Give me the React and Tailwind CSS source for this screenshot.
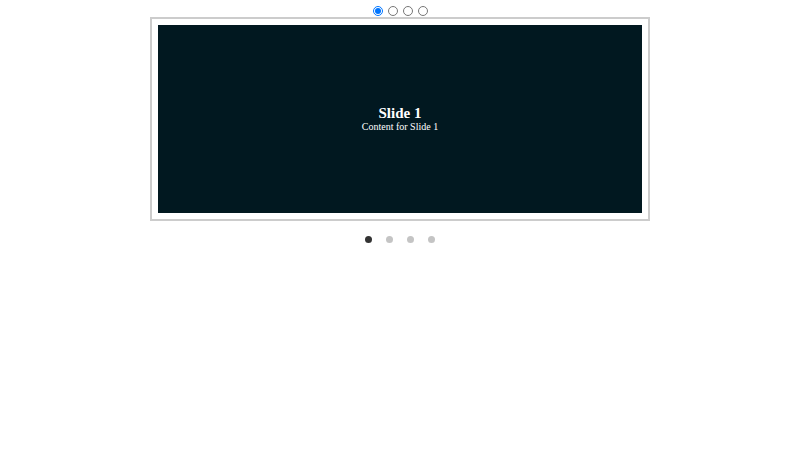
import { useState } from "react";

const slides = [
  { id: 1, title: "Slide 1", content: "Content for Slide 1" },
  { id: 2, title: "Slide 2", content: "Content for Slide 2" },
  { id: 3, title: "Slide 3", content: "Content for Slide 3" },
  { id: 4, title: "Slide 4", content: "Content for Slide 4" },
];

function App() {
  const [active, setActive] = useState(0);
  const slide = slides[active];

  return (
    <div className="flex flex-col items-center bg-white font-['Liberation_Serif',serif]">
      <div className="flex h-[17px] items-center gap-[5px] pt-[4px]">
        {slides.map((s, i) => (
          <input
            key={s.id}
            type="radio"
            name="slide"
            checked={active === i}
            onChange={() => setActive(i)}
            className="h-[10px] w-[10px]"
          />
        ))}
      </div>

      <div className="w-[500px] border-2 border-[#cccccc] p-[6px]">
        <div className="flex h-[188px] flex-col items-center justify-center bg-[#011820] text-white">
          <h2 className="text-[15px] font-bold leading-[16px]">{slide.title}</h2>
          <p className="text-[10px] leading-[12px]">{slide.content}</p>
        </div>
      </div>

      <div className="mt-[15px] flex gap-[14px]">
        {slides.map((s, i) => (
          <button
            key={s.id}
            onClick={() => setActive(i)}
            className={`h-[7px] w-[7px] rounded-full ${
              active === i ? "bg-[#333333]" : "bg-[#c4c4c4]"
            }`}
          ></button>
        ))}
      </div>
    </div>
  );
}

export default App;
